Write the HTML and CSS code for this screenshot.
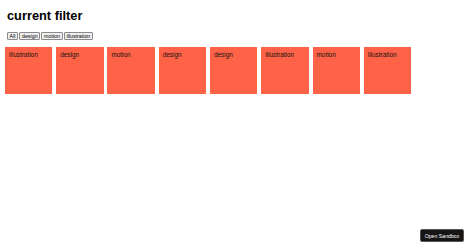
FILE: index.html
```html
<!DOCTYPE html>
<html>
<head>
<meta charset="utf-8">
<link rel="stylesheet" href="styles.css">
</head>
<body>
<div class="page">
  <h1 class="title">current filter</h1>
  <div class="filters">
    <button class="filter">All</button><button class="filter">design</button><button class="filter">motion</button><button class="filter">illustration</button>
  </div>
  <div class="grid">
    <div class="card">illustration</div>
    <div class="card">design</div>
    <div class="card">motion</div>
    <div class="card">design</div>
    <div class="card">design</div>
    <div class="card">illustration</div>
    <div class="card">motion</div>
    <div class="card">illustration</div>
  </div>
</div>
<a class="sandbox">Open Sandbox</a>
</body>
</html>
```
FILE: styles.css
```css
html, body {
  margin: 0;
  padding: 0;
  background: #fff;
  font-family: "Liberation Sans", Arial, sans-serif;
}
.page {
  padding: 8px 0 0 7px;
}
.title {
  margin: 0;
  font-size: 12.8px;
  line-height: 15px;
  font-weight: bold;
  color: #000;
}
.filters {
  display: flex;
  gap: 1.3px;
  margin-top: 9px;
}
.filter {
  font-family: "Liberation Sans", Arial, sans-serif;
  font-size: 5.3px;
  line-height: 6px;
  padding: 0 1.6px;
  margin: 0;
  height: 8.2px;
  border: 0.8px solid #8a8a8a;
  border-radius: 1px;
  background: #efefef;
  color: #000;
}
.grid {
  display: flex;
  margin-top: 6.5px;
  margin-left: -4px;
}
.card {
  width: 47.4px;
  height: 47.4px;
  margin: 0 1.95px;
  box-sizing: border-box;
  padding: 4.5px 4px;
  background: #ff6347;
  font-size: 6.4px;
  line-height: 7px;
  color: #111;
}
.sandbox {
  position: fixed;
  right: 10px;
  bottom: 6px;
  width: 44px;
  height: 13px;
  box-sizing: border-box;
  background: #151515;
  border: 0.5px solid #555;
  border-radius: 2px;
  color: #fff;
  font-size: 5.2px;
  display: flex;
  align-items: center;
  justify-content: center;
}
```
